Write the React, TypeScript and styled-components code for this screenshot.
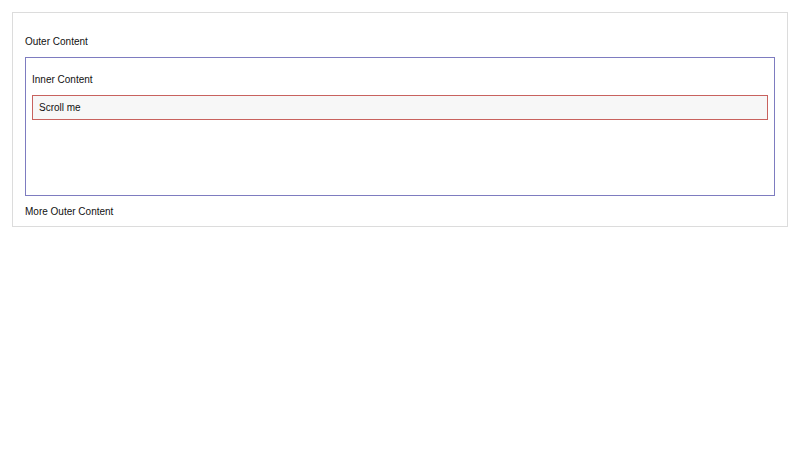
import styled, { createGlobalStyle } from 'styled-components';

const GlobalStyle = createGlobalStyle`
  body {
    margin: 0;
    padding: 12px;
    background: #fff;
    font-family: 'Liberation Sans', Arial, sans-serif;
    font-size: 10px;
    color: #111;
  }
`;

const OuterBox = styled.section`
  border: 1px solid #dcdcdc;
  padding: 13px 12px 9px;
  p {
    margin: 10px 0;
  }
  & > p:last-child {
    margin-bottom: 0;
  }
`;

const InnerBox = styled.div`
  box-sizing: border-box;
  height: 139px;
  overflow: auto;
  border: 1px solid #7e7cc0;
  padding: 0 6px 6px;
  p {
    margin: 16px 0 10px;
  }
`;

const ScrollItem = styled.div`
  border: 1px solid #c8625e;
  background: #f7f7f7;
  padding: 6px;
`;

export default function App() {
  return (
    <>
      <GlobalStyle />
      <OuterBox>
        <p>Outer Content</p>
        <InnerBox>
          <p>Inner Content</p>
          <ScrollItem>Scroll me</ScrollItem>
        </InnerBox>
        <p>More Outer Content</p>
      </OuterBox>
    </>
  );
}
